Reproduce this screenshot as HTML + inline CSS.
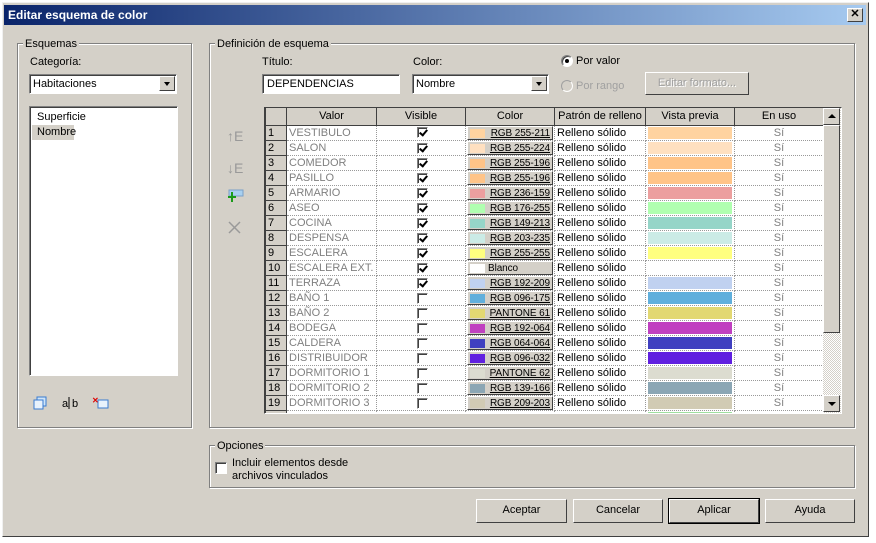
<!DOCTYPE html>
<html><head><meta charset="utf-8"><style>
*{box-sizing:border-box;margin:0;padding:0}
body{width:876px;height:543px;background:#fff;font-family:Tahoma,"Liberation Sans",sans-serif;font-size:11px;color:#000;position:relative;overflow:hidden}
.a{position:absolute}
.win{left:2px;top:2px;width:867px;height:535px;background:#d4d0c8;border:1px solid;border-color:#f0f0f0 #404040 #404040 #f0f0f0}
.title{left:4px;top:5px;width:862px;height:20px;background:linear-gradient(90deg,#0a246a,#a6caf0);color:#fff;font-weight:bold;font-size:12px;padding:2px 4px;line-height:16px}
.xb{left:847px;top:8px;width:16px;height:14px;background:#d4d0c8;border:1px solid;border-color:#fff #404040 #404040 #fff;font-size:11px;line-height:11px;text-align:center;font-weight:bold;color:#000}
.grp{border:1px solid #808080;box-shadow:1px 1px 0 #fff, inset 1px 1px 0 #fff}
.lg{background:#d4d0c8;padding:0 2px;line-height:12px}
.sunk{background:#fff;border:1px solid;border-color:#808080 #fff #fff #808080;box-shadow:inset 1px 1px 0 #404040}
.dd{position:absolute;right:1px;top:1px;width:16px;height:15px;background:#d4d0c8;border:1px solid;border-color:#fff #404040 #404040 #fff}
.dd:after{content:"";position:absolute;left:4px;top:5px;border:3.5px solid transparent;border-top:4px solid #000}
.btn{background:#d4d0c8;border:1px solid;border-color:#fff #404040 #404040 #fff;text-align:center;line-height:21px;font-size:11px}
table{border-collapse:collapse;table-layout:fixed}
td{height:15px;padding:0 0 0 2px;border-right:1px dotted #999;border-bottom:1px dotted #999;white-space:nowrap;overflow:hidden;line-height:14px;font-size:11px}
td.n{background:#d4d0c8;border:1px solid #404040;border-top:none;padding-left:2px}
td.v{color:#808080}
td.u{color:#808080;text-align:center;padding:0}
th{height:17px;background:#d4d0c8;font-weight:normal;border:1px solid #404040;border-top:none;font-size:11px}
.cb{display:inline-block;width:11px;height:11px;border:1px solid;border-color:#808080 #fff #fff #808080;background:#fff;box-shadow:inset 1px 1px 0 #404040;position:relative;vertical-align:middle}
.ck:after{content:"";position:absolute;left:3px;top:0px;width:3px;height:6px;border:solid #000;border-width:0 2px 2px 0;transform:rotate(40deg)}
.cc{position:relative;padding:0 !important}
.cbx{position:absolute;left:1px;top:0px;right:1px;bottom:0;background:#d4d0c8;border:1px solid;border-color:#fff #404040 #404040 #fff;text-align:right;padding-right:2px;line-height:13px;text-decoration:underline;font-size:10px;letter-spacing:-0.1px}
.sw{position:absolute;left:2px;top:2px;width:15px;height:9px}
.pv{padding:1px 2px !important}
.pv div{height:12px}
</style></head><body>
<div class="a win"></div>
<div class="a title">Editar esquema de color</div>
<div class="a xb">✕</div>

<div class="a grp" style="left:17px;top:43px;width:175px;height:385px"></div>
<div class="a lg" style="left:23px;top:38px">Esquemas</div>
<div class="a" style="left:30px;top:56px">Categoría:</div>
<div class="a sunk" style="left:29px;top:74px;width:148px;height:20px;padding:3px 3px">Habitaciones<div class="dd"></div></div>
<div class="a sunk" style="left:29px;top:106px;width:149px;height:270px;padding:3px 2px">
<div style="padding-left:5px;line-height:15px">Superficie</div>
<div style="padding-left:5px;line-height:15px;background:#d4d0c8;width:42px">Nombre</div></div>
<svg class="a" style="left:32px;top:395px" width="90" height="16">
<rect x="5" y="2" width="9" height="9" fill="#cfe4f8" stroke="#3a7bd0"/><rect x="2" y="5" width="9" height="9" fill="#e8f2fc" stroke="#3a7bd0"/>
<text x="30" y="12" font-size="11" font-family="Liberation Sans">a</text><line x1="37" y1="2" x2="37" y2="14" stroke="#000"/><text x="40" y="12" font-size="11" font-family="Liberation Sans">b</text>
<rect x="66" y="5" width="10" height="8" fill="#e8f2fc" stroke="#3a7bd0"/><text x="60" y="8" font-size="8" fill="#d00" font-weight="bold">✕</text>
</svg>

<div class="a grp" style="left:209px;top:43px;width:646px;height:385px"></div>
<div class="a lg" style="left:215px;top:38px">Definición de esquema</div>
<div class="a" style="left:262px;top:56px">Título:</div>
<div class="a sunk" style="left:262px;top:74px;width:138px;height:20px;padding:3px 4px">DEPENDENCIAS</div>
<div class="a" style="left:413px;top:56px">Color:</div>
<div class="a sunk" style="left:412px;top:74px;width:137px;height:20px;padding:3px 3px">Nombre<div class="dd"></div></div>
<div class="a" style="left:561px;top:55px"><span class="cb" style="border-radius:50%;width:12px;height:12px"><span style="position:absolute;left:3px;top:3px;width:4px;height:4px;background:#000;border-radius:50%"></span></span> Por valor</div>
<div class="a" style="left:561px;top:80px;color:#a0a0a0"><span class="cb" style="border-radius:50%;width:12px;height:12px;background:#d4d0c8;box-shadow:none;border-color:#a0a0a0 #fff #fff #a0a0a0"></span> Por rango</div>
<div class="a btn" style="left:645px;top:72px;width:104px;height:23px;color:#a0a0a0;text-shadow:1px 1px 0 #fff">Editar formato...</div>

<svg class="a" style="left:225px;top:125px" width="22" height="110">
<text x="2" y="16" font-size="14" fill="#999" font-family="Liberation Sans">↑E</text>
<text x="2" y="48" font-size="14" fill="#999" font-family="Liberation Sans">↓E</text>
<rect x="4" y="65" width="14" height="6" fill="#a8d0f0" stroke="#7aa0c8"/>
<path d="M3 72h8M7 67v10" stroke="#1a9a1a" stroke-width="2"/>
<path d="M4 97l11 11M15 97l-11 11" stroke="#999" stroke-width="1.5"/>
</svg>

<div class="a" style="left:264px;top:107px;width:578px;height:307px;border:1px solid;border-color:#404040 #fff #fff #404040;background:#fff;overflow:hidden">
<table style="width:558px">
<colgroup><col style="width:21px"><col style="width:90px"><col style="width:89px"><col style="width:89px"><col style="width:91px"><col style="width:89px"><col style="width:89px"></colgroup>
<tr><th></th><th>Valor</th><th>Visible</th><th>Color</th><th>Patrón de relleno</th><th>Vista previa</th><th>En uso</th></tr>
</table>
<table style="width:558px" id="t">
<colgroup><col style="width:21px"><col style="width:90px"><col style="width:89px"><col style="width:89px"><col style="width:91px"><col style="width:89px"><col style="width:89px"></colgroup>
<tbody>
<tr><td class="n">1</td><td class="v">VESTIBULO</td><td style="text-align:center"><span class="cb ck"></span></td><td class="cc"><div class="cbx"><span class="sw" style="background:#ffd3a0"></span>RGB 255-211</div></td><td>Relleno sólido</td><td class="pv"><div style="background:#ffd3a0"></div></td><td class="u">Sí</td></tr>
<tr><td class="n">2</td><td class="v">SALON</td><td style="text-align:center"><span class="cb ck"></span></td><td class="cc"><div class="cbx"><span class="sw" style="background:#ffe0c0"></span>RGB 255-224</div></td><td>Relleno sólido</td><td class="pv"><div style="background:#ffe0c0"></div></td><td class="u">Sí</td></tr>
<tr><td class="n">3</td><td class="v">COMEDOR</td><td style="text-align:center"><span class="cb ck"></span></td><td class="cc"><div class="cbx"><span class="sw" style="background:#ffc488"></span>RGB 255-196</div></td><td>Relleno sólido</td><td class="pv"><div style="background:#ffc488"></div></td><td class="u">Sí</td></tr>
<tr><td class="n">4</td><td class="v">PASILLO</td><td style="text-align:center"><span class="cb ck"></span></td><td class="cc"><div class="cbx"><span class="sw" style="background:#ffc488"></span>RGB 255-196</div></td><td>Relleno sólido</td><td class="pv"><div style="background:#ffc488"></div></td><td class="u">Sí</td></tr>
<tr><td class="n">5</td><td class="v">ARMARIO</td><td style="text-align:center"><span class="cb ck"></span></td><td class="cc"><div class="cbx"><span class="sw" style="background:#ec9f9f"></span>RGB 236-159</div></td><td>Relleno sólido</td><td class="pv"><div style="background:#ec9f9f"></div></td><td class="u">Sí</td></tr>
<tr><td class="n">6</td><td class="v">ASEO</td><td style="text-align:center"><span class="cb ck"></span></td><td class="cc"><div class="cbx"><span class="sw" style="background:#b0ffb0"></span>RGB 176-255</div></td><td>Relleno sólido</td><td class="pv"><div style="background:#b0ffb0"></div></td><td class="u">Sí</td></tr>
<tr><td class="n">7</td><td class="v">COCINA</td><td style="text-align:center"><span class="cb ck"></span></td><td class="cc"><div class="cbx"><span class="sw" style="background:#95d5c8"></span>RGB 149-213</div></td><td>Relleno sólido</td><td class="pv"><div style="background:#95d5c8"></div></td><td class="u">Sí</td></tr>
<tr><td class="n">8</td><td class="v">DESPENSA</td><td style="text-align:center"><span class="cb ck"></span></td><td class="cc"><div class="cbx"><span class="sw" style="background:#cbebe6"></span>RGB 203-235</div></td><td>Relleno sólido</td><td class="pv"><div style="background:#cbebe6"></div></td><td class="u">Sí</td></tr>
<tr><td class="n">9</td><td class="v">ESCALERA</td><td style="text-align:center"><span class="cb ck"></span></td><td class="cc"><div class="cbx"><span class="sw" style="background:#ffff80"></span>RGB 255-255</div></td><td>Relleno sólido</td><td class="pv"><div style="background:#ffff80"></div></td><td class="u">Sí</td></tr>
<tr><td class="n">10</td><td class="v">ESCALERA EXT.</td><td style="text-align:center"><span class="cb ck"></span></td><td class="cc"><div class="cbx" style="text-decoration:none;text-align:left;padding-left:20px"><span class="sw" style="background:#fff"></span>Blanco</div></td><td>Relleno sólido</td><td class="pv"><div style="background:#fff"></div></td><td class="u">Sí</td></tr>
<tr><td class="n">11</td><td class="v">TERRAZA</td><td style="text-align:center"><span class="cb ck"></span></td><td class="cc"><div class="cbx"><span class="sw" style="background:#c0d1f0"></span>RGB 192-209</div></td><td>Relleno sólido</td><td class="pv"><div style="background:#c0d1f0"></div></td><td class="u">Sí</td></tr>
<tr><td class="n">12</td><td class="v">BAÑO 1</td><td style="text-align:center"><span class="cb"></span></td><td class="cc"><div class="cbx"><span class="sw" style="background:#60afdc"></span>RGB 096-175</div></td><td>Relleno sólido</td><td class="pv"><div style="background:#60afdc"></div></td><td class="u">Sí</td></tr>
<tr><td class="n">13</td><td class="v">BAÑO 2</td><td style="text-align:center"><span class="cb"></span></td><td class="cc"><div class="cbx"><span class="sw" style="background:#e2d872"></span>PANTONE 61</div></td><td>Relleno sólido</td><td class="pv"><div style="background:#e2d872"></div></td><td class="u">Sí</td></tr>
<tr><td class="n">14</td><td class="v">BODEGA</td><td style="text-align:center"><span class="cb"></span></td><td class="cc"><div class="cbx"><span class="sw" style="background:#c040c0"></span>RGB 192-064</div></td><td>Relleno sólido</td><td class="pv"><div style="background:#c040c0"></div></td><td class="u">Sí</td></tr>
<tr><td class="n">15</td><td class="v">CALDERA</td><td style="text-align:center"><span class="cb"></span></td><td class="cc"><div class="cbx"><span class="sw" style="background:#4040c0"></span>RGB 064-064</div></td><td>Relleno sólido</td><td class="pv"><div style="background:#4040c0"></div></td><td class="u">Sí</td></tr>
<tr><td class="n">16</td><td class="v">DISTRIBUIDOR</td><td style="text-align:center"><span class="cb"></span></td><td class="cc"><div class="cbx"><span class="sw" style="background:#6020e0"></span>RGB 096-032</div></td><td>Relleno sólido</td><td class="pv"><div style="background:#6020e0"></div></td><td class="u">Sí</td></tr>
<tr><td class="n">17</td><td class="v">DORMITORIO 1</td><td style="text-align:center"><span class="cb"></span></td><td class="cc"><div class="cbx"><span class="sw" style="background:#dcdcd0"></span>PANTONE 62</div></td><td>Relleno sólido</td><td class="pv"><div style="background:#dcdcd0"></div></td><td class="u">Sí</td></tr>
<tr><td class="n">18</td><td class="v">DORMITORIO 2</td><td style="text-align:center"><span class="cb"></span></td><td class="cc"><div class="cbx"><span class="sw" style="background:#8ba6b4"></span>RGB 139-166</div></td><td>Relleno sólido</td><td class="pv"><div style="background:#8ba6b4"></div></td><td class="u">Sí</td></tr>
<tr><td class="n">19</td><td class="v">DORMITORIO 3</td><td style="text-align:center"><span class="cb"></span></td><td class="cc"><div class="cbx"><span class="sw" style="background:#d1cbb4"></span>RGB 209-203</div></td><td>Relleno sólido</td><td class="pv"><div style="background:#d1cbb4"></div></td><td class="u">Sí</td></tr>
<tr><td class="n">20</td><td class="v"></td><td></td><td></td><td></td><td class="pv"><div style="background:#9fdfa0"></div></td><td></td></tr>
</tbody></table>
<div class="a" style="left:558px;top:0;width:18px;height:305px;background:#e8e6e2;background-image:repeating-conic-gradient(#d4d0c8 0 25%,#fff 0 50%);background-size:2px 2px"></div>
<div class="a btn" style="left:558px;top:0;width:17px;height:17px"><span style="position:absolute;left:4px;top:5px;border:4px solid transparent;border-bottom:4px solid #000;border-top:none"></span></div>
<div class="a btn" style="left:558px;top:17px;width:17px;height:208px"></div>
<div class="a btn" style="left:558px;top:287px;width:17px;height:17px"><span style="position:absolute;left:4px;top:6px;border:4px solid transparent;border-top:4px solid #000;border-bottom:none"></span></div>
</div>

<div class="a grp" style="left:209px;top:445px;width:646px;height:43px"></div>
<div class="a lg" style="left:215px;top:440px">Opciones</div>
<span class="a cb" style="left:215px;top:462px;width:12px;height:12px"></span>
<div class="a" style="left:232px;top:457px;line-height:13px">Incluir elementos desde<br>archivos vinculados</div>

<div class="a btn" style="left:476px;top:499px;width:91px;height:24px">Aceptar</div>
<div class="a btn" style="left:573px;top:499px;width:90px;height:24px">Cancelar</div>
<div class="a btn" style="left:669px;top:499px;width:90px;height:24px;outline:1px solid #000">Aplicar</div>
<div class="a btn" style="left:765px;top:499px;width:90px;height:24px">Ayuda</div>
</body></html>
